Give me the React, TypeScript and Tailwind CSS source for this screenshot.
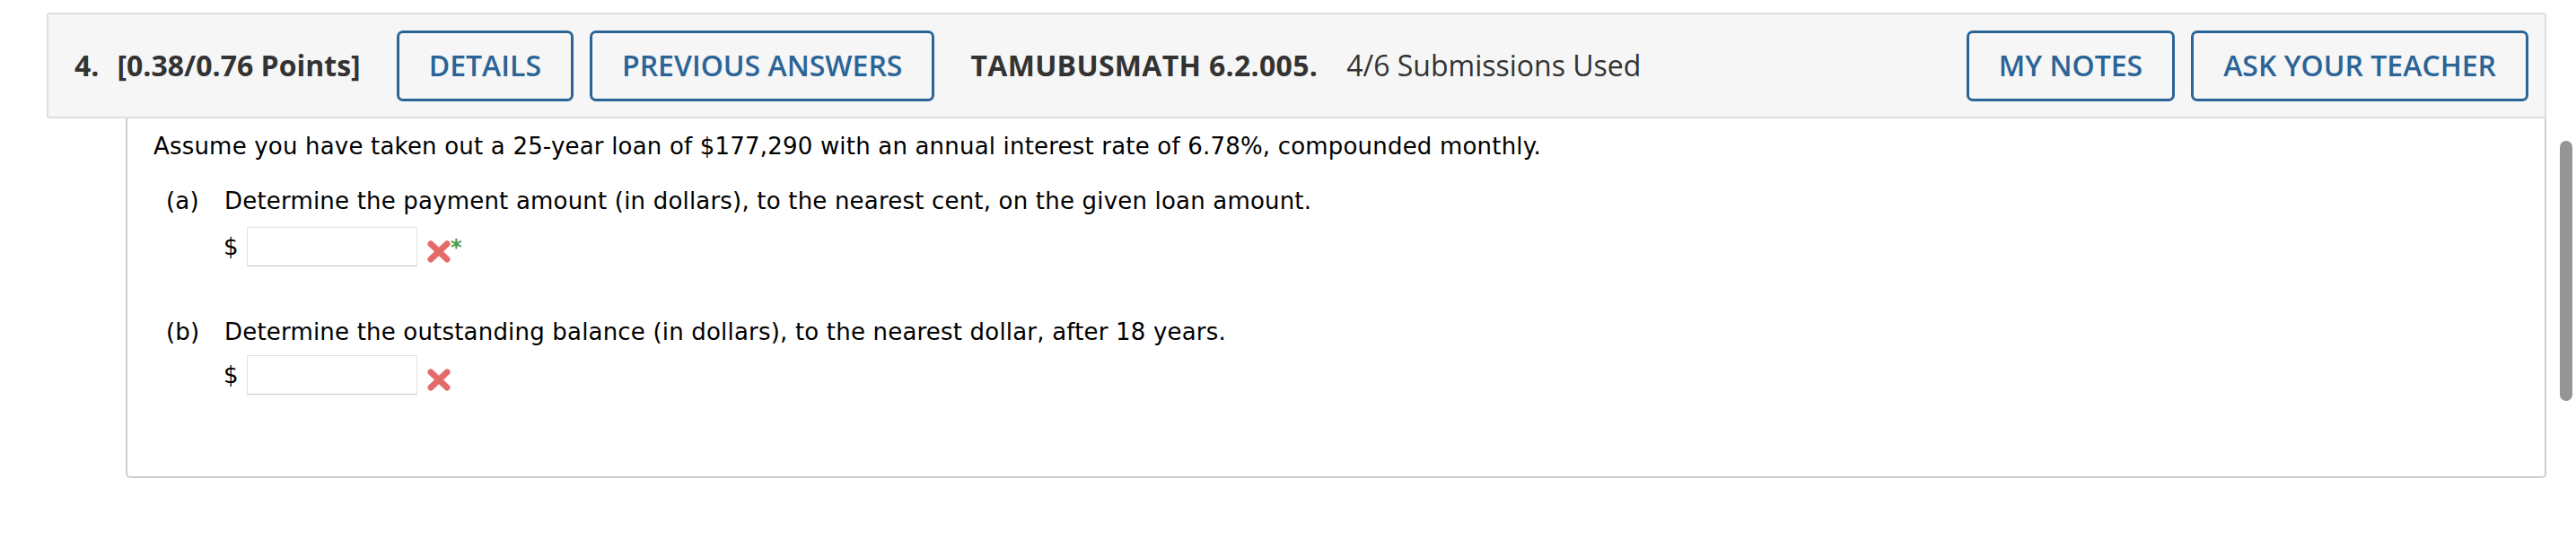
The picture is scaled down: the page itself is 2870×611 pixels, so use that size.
// Question card: header bar with score and actions, body with loan question parts.
function HeaderButton({ label }: { label: string }) {
  return (
    <button className="h-[79px] rounded-[7px] border-[3px] border-[#2b6496] px-[33px] text-[32px] font-semibold leading-none text-[#2b6496]">
      {label}
    </button>
  );
}

function WrongMark() {
  return (
    <svg width="26" height="25" viewBox="0 0 26 25" aria-hidden>
      <g stroke="#e35b5b" strokeWidth="7" strokeLinecap="round" opacity="0.9">
        <line x1="4" y1="4" x2="22" y2="21" />
        <line x1="22" y1="4" x2="4" y2="21" />
      </g>
    </svg>
  );
}

function AnswerRow({ star }: { star?: boolean }) {
  return (
    <div className="flex items-center pl-[78px]">
      <span className="w-[26px]">$</span>
      <input
        type="text"
        className="h-[44px] w-[190px] border border-[#e2e2e2] border-b-[#c4c4c4] bg-white outline-none"
      />
      <div className="ml-[11px] mt-[10px] flex items-start">
        <WrongMark />
        {star && (
          <span className="-mt-[4px] text-[24px] font-bold leading-none text-[#4b9b45]">*</span>
        )}
      </div>
    </div>
  );
}

export default function App() {
  return (
    <div className="relative min-h-[611px] bg-white pt-[14px]">
      <div className="ml-[52px] w-[2785px]">
        <div className="flex h-[118px] items-center justify-between rounded-[3px] border-2 border-[#dedede] bg-[#f6f6f6] pl-[29px] pr-[18px] font-['Open_Sans',sans-serif] text-[32px] text-[#333333]">
          <div className="flex items-center">
            <span className="font-bold">4.</span>
            <span className="ml-[20px] font-bold">[0.38/0.76 Points]</span>
            <div className="ml-[40px] flex gap-[18px]">
              <HeaderButton label="DETAILS" />
              <HeaderButton label="PREVIOUS ANSWERS" />
            </div>
            <span className="ml-[40px] font-bold tracking-[0.3px]">TAMUBUSMATH 6.2.005.</span>
            <span className="ml-[32px]">4/6 Submissions Used</span>
          </div>
          <div className="flex gap-[18px]">
            <HeaderButton label="MY NOTES" />
            <HeaderButton label="ASK YOUR TEACHER" />
          </div>
        </div>

        <div className="ml-[88px] h-[401px] rounded-b-[5px] border-2 border-t-0 border-[#cccccc] pl-[29px] pt-[16px] font-['DejaVu_Sans',Verdana,sans-serif] text-[26px] leading-[30px] tracking-[0.19px] text-black">
          <p>Assume you have taken out a 25-year loan of $177,290 with an annual interest rate of 6.78%, compounded monthly.</p>

          <div className="mt-[31px] flex pl-[14px]">
            <span className="w-[65px]">(a)</span>
            <span>Determine the payment amount (in dollars), to the nearest cent, on the given loan amount.</span>
          </div>
          <div className="mt-[14px]">
            <AnswerRow star />
          </div>

          <div className="mt-[58px] flex pl-[14px]">
            <span className="w-[65px]">(b)</span>
            <span>Determine the outstanding balance (in dollars), to the nearest dollar, after 18 years.</span>
          </div>
          <div className="mt-[11px]">
            <AnswerRow />
          </div>
        </div>
      </div>

      <div className="absolute left-[2852px] top-[157px] h-[290px] w-[14px] rounded-full bg-[#959595]" />
    </div>
  );
}
